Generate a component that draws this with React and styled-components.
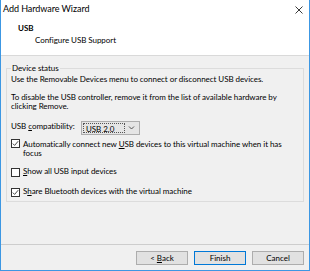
import React from "react";
import styled, { createGlobalStyle } from "styled-components";

const GlobalStyle = createGlobalStyle`
  html, body { margin: 0; padding: 0; background: #ffffff; }
  body {
    font-family: Lato, "Noto Sans", sans-serif;
    font-size: 8px;
    letter-spacing: -0.05px;
    color: #000;
  }
  #root { width: 310px; height: 271px; }
`;

const Window = styled.div`
  box-sizing: border-box;
  width: 310px;
  height: 271px;
  display: flex;
  flex-direction: column;
  border: 1px solid #3c97e3;
  border-top: none;
  background: #f0f0f0;
`;

const TitleBar = styled.div`
  height: 18px;
  display: flex;
  align-items: center;
  justify-content: space-between;
  background: #ffffff;
  padding: 0 6px 0 2px;
  font-size: 9px;
  line-height: 10px;
`;

const CloseIcon = styled.svg`
  width: 8px;
  height: 8px;
  display: block;
  margin-top: 1px;
`;

const Header = styled.div`
  height: 37px;
  box-sizing: content-box;
  background: #ffffff;
  border-bottom: 1px solid #d9d9d9;
  padding-left: 17px;
  display: flex;
  flex-direction: column;
  line-height: 10px;
`;

const HeaderTitle = styled.div`
  font-weight: bold;
  padding-top: 5px;
`;

const HeaderSubtitle = styled.div`
  margin-top: 2px;
  padding-left: 17px;
`;

const Body = styled.div`
  flex: 1;
  padding: 7px 5px 0;
  line-height: 9px;
`;

const GroupBox = styled.fieldset`
  margin: 0;
  border: 1px solid #dcdcdc;
  padding: 0 4px 4px 4px;
  min-width: 0;
`;

const Legend = styled.legend`
  padding: 0 1px;
  line-height: 10px;
`;

const Para = styled.p`
  margin: ${(p) => p.$gap}px 0 0;
`;

const CompatRow = styled.div`
  display: flex;
  align-items: flex-start;
  margin-top: 10px;
`;

const CompatLabel = styled.span`
  width: 70px;
  margin-top: 1px;
`;

const Select = styled.div`
  box-sizing: border-box;
  width: 59px;
  height: 14px;
  border: 1px solid #adadad;
  background: #e5e5e5;
  display: flex;
  align-items: center;
  padding: 1px;
`;

const SelectValue = styled.span`
  flex: 1;
  height: 100%;
  box-sizing: border-box;
  border: 1px dotted #555;
  padding-left: 2px;
  line-height: 10px;
  white-space: nowrap;
`;

const Chevron = styled.svg`
  width: 13px;
  height: 8px;
  display: block;
`;

const CheckRow = styled.label`
  display: flex;
  align-items: flex-start;
  margin-top: ${(p) => p.$gap}px;
`;

const CheckBox = styled.span`
  box-sizing: border-box;
  flex: none;
  width: 9px;
  height: 9px;
  border: 1px solid #333333;
  background: #ffffff;
  margin-top: ${(p) => p.$offset || 0}px;
  display: flex;
  align-items: center;
  justify-content: center;
`;

const CheckText = styled.span`
  margin-left: 3px;
  margin-top: ${(p) => p.$offset || 0}px;
  white-space: nowrap;
`;

const Key = styled.span`
  text-decoration: underline;
`;

const Footer = styled.div`
  border-top: 1px solid #cdcdcd;
  padding: 6px 5px 5px 0;
  display: flex;
  justify-content: flex-end;
  gap: 6px;
`;

const Button = styled.button`
  box-sizing: border-box;
  width: 52px;
  height: 14px;
  margin: 0;
  padding: 0;
  font: inherit;
  font-size: 8px;
  line-height: 10px;
  color: #000;
  background: #e1e1e1;
  border: 1px solid ${(p) => (p.$default ? "#0078d7" : "#adadad")};
`;

function Check({ checked, offset }) {
  return (
    <CheckBox $offset={offset}>
      {checked && (
        <svg width="7" height="7" viewBox="0 0 7 7">
          <path d="M0.8 3.6 L2.6 5.4 L6.2 1.2" fill="none" stroke="#333" strokeWidth="0.9" />
        </svg>
      )}
    </CheckBox>
  );
}

export default function App() {
  return (
    <>
      <GlobalStyle />
      <Window>
        <TitleBar>
          <span>Add Hardware Wizard</span>
          <CloseIcon viewBox="0 0 8 8">
            <path d="M0.5 0.5 L7.5 7.5 M7.5 0.5 L0.5 7.5" stroke="#222" strokeWidth="0.9" />
          </CloseIcon>
        </TitleBar>
        <Header>
          <HeaderTitle>USB</HeaderTitle>
          <HeaderSubtitle>Configure USB Support</HeaderSubtitle>
        </Header>
        <Body>
          <GroupBox>
            <Legend>Device status</Legend>
            <Para $gap={2}>Use the Removable Devices menu to connect or disconnect USB devices.</Para>
            <Para $gap={9}>
              To disable the USB controller, remove it from the list of available hardware by
              <br />
              clicking Remove.
            </Para>
            <CompatRow>
              <CompatLabel>
                USB <Key>c</Key>ompatibility:
              </CompatLabel>
              <Select>
                <SelectValue>USB 2.0</SelectValue>
                <Chevron viewBox="0 0 13 8">
                  <path d="M4 2.5 L6.5 5 L9 2.5" fill="none" stroke="#444" strokeWidth="0.9" />
                </Chevron>
              </Select>
            </CompatRow>
            <CheckRow $gap={4}>
              <Check checked />
              <CheckText $offset={1}>
                Automatically connect new <Key>U</Key>SB devices to this virtual machine when it has
                <br />
                focus
              </CheckText>
            </CheckRow>
            <CheckRow $gap={9}>
              <Check offset={1} />
              <CheckText>
                <Key>S</Key>how all USB input devices
              </CheckText>
            </CheckRow>
            <CheckRow $gap={10}>
              <Check checked offset={1} />
              <CheckText>
                S<Key>h</Key>are Bluetooth devices with the virtual machine
              </CheckText>
            </CheckRow>
          </GroupBox>
        </Body>
        <Footer>
          <Button>
            &lt; <Key>B</Key>ack
          </Button>
          <Button $default>Finish</Button>
          <Button>Cancel</Button>
        </Footer>
      </Window>
    </>
  );
}
